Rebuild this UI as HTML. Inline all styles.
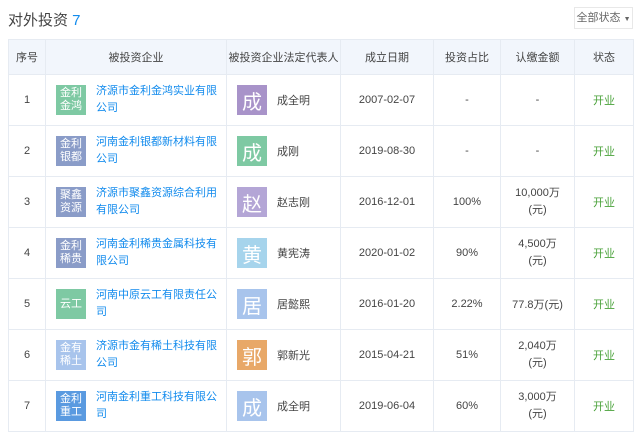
<!DOCTYPE html>
<html><head><meta charset="utf-8"><style>
body{margin:0;width:640px;height:441px;background:#fff;font-family:"Liberation Sans","Noto Sans CJK SC",sans-serif;color:#444;position:relative;overflow:hidden}
.title{position:absolute;left:8px;top:9px;font-size:15px;color:#444}
.title span{color:#128bed}
.btn{position:absolute;left:574px;top:7px;width:59px;height:22px;border:1px solid #e8e8e8;font-size:11px;color:#666;line-height:21px;text-align:center;box-sizing:border-box}
.btn small{font-size:7px}
table{position:absolute;left:8px;top:39px;border-collapse:collapse;font-size:11px;table-layout:fixed}
td,th{border:1px solid #e6ebf2;text-align:center;padding:0;height:50px}
th{background:#f2f6fc;font-weight:normal;height:34px;color:#444}
.co{text-align:left}
.co div{display:flex;align-items:center}
.lg{width:30px;height:30px;margin:0 10px 0 10px;color:#fff;font-size:11px;line-height:13px;display:flex;align-items:center;justify-content:center;text-align:center;flex:none}
.nm{color:#128bed;line-height:17px;width:124px;font-size:11px}
.av{width:30px;height:30px;margin:0 10px 0 10px;color:#fff;font-size:20px;display:flex;align-items:center;justify-content:center;flex:none}
.ok{color:#4aa23a}
.sm{line-height:17px}
</style></head><body>
<div class="title">对外投资 <span>7</span></div>
<div class="btn">全部状态 <small>▼</small></div>
<table>
<colgroup><col style="width:37px"><col style="width:181px"><col style="width:114px"><col style="width:93px"><col style="width:67px"><col style="width:74px"><col style="width:59px"></colgroup>
<tr><th>序号</th><th>被投资企业</th><th>被投资企业法定代表人</th><th>成立日期</th><th>投资占比</th><th>认缴金额</th><th>状态</th></tr>
<tr><td>1</td><td class="co"><div><span class="lg" style="background:#7ec9a3">金利<br>金鸿</span><span class="nm">济源市金利金鸿实业有限公司</span></div></td><td class="co"><div><span class="av" style="background:#a893c9">成</span>成全明</div></td><td>2007-02-07</td><td>-</td><td>-</td><td class="ok">开业</td></tr>
<tr><td>2</td><td class="co"><div><span class="lg" style="background:#8a9cc8">金利<br>银都</span><span class="nm">河南金利银都新材料有限公司</span></div></td><td class="co"><div><span class="av" style="background:#7ec9a3">成</span>成刚</div></td><td>2019-08-30</td><td>-</td><td>-</td><td class="ok">开业</td></tr>
<tr><td>3</td><td class="co"><div><span class="lg" style="background:#8a9cc8">聚鑫<br>资源</span><span class="nm">济源市聚鑫资源综合利用有限公司</span></div></td><td class="co"><div><span class="av" style="background:#b4a6d6">赵</span>赵志刚</div></td><td>2016-12-01</td><td>100%</td><td class="sm">10,000万<br>(元)</td><td class="ok">开业</td></tr>
<tr><td>4</td><td class="co"><div><span class="lg" style="background:#8a9cc8">金利<br>稀贵</span><span class="nm">河南金利稀贵金属科技有限公司</span></div></td><td class="co"><div><span class="av" style="background:#a6d4ec">黄</span>黄宪涛</div></td><td>2020-01-02</td><td>90%</td><td class="sm">4,500万<br>(元)</td><td class="ok">开业</td></tr>
<tr><td>5</td><td class="co"><div><span class="lg" style="background:#7ec9a3">云工</span><span class="nm">河南中原云工有限责任公司</span></div></td><td class="co"><div><span class="av" style="background:#a8c4ec">居</span>居懿熙</div></td><td>2016-01-20</td><td>2.22%</td><td>77.8万(元)</td><td class="ok">开业</td></tr>
<tr><td>6</td><td class="co"><div><span class="lg" style="background:#a8c4ec">金有<br>稀土</span><span class="nm">济源市金有稀土科技有限公司</span></div></td><td class="co"><div><span class="av" style="background:#e8a868">郭</span>郭新光</div></td><td>2015-04-21</td><td>51%</td><td class="sm">2,040万<br>(元)</td><td class="ok">开业</td></tr>
<tr><td>7</td><td class="co"><div><span class="lg" style="background:#5a9ae0">金利<br>重工</span><span class="nm">河南金利重工科技有限公司</span></div></td><td class="co"><div><span class="av" style="background:#a8c4ec">成</span>成全明</div></td><td>2019-06-04</td><td>60%</td><td class="sm">3,000万<br>(元)</td><td class="ok">开业</td></tr>
</table>
</body></html>
